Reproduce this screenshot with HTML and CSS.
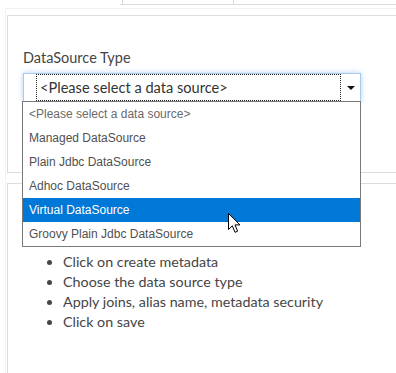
FILE: index.html
```html
<!DOCTYPE html>
<html lang="en">
<head>
    <meta charset="UTF-8">
    <meta name="viewport" content="width=device-width, initial-scale=1.0">
    <title>Create Metadata</title>
    <link rel="stylesheet" href="styles.css">
</head>
<body>
    <!-- Tab strip, scrolled mostly out of view -->
    <div class="tabs">
        <div class="tab"></div>
        <div class="tab tab-wide"></div>
    </div>

    <div class="page">
        <!-- Form card with the datasource select -->
        <div class="card card-form">
            <label class="field-label">DataSource Type</label>
            <div class="select">
                <div class="select-value">&lt;Please select a data source&gt;</div>
                <div class="select-arrow"></div>

                <!-- Open dropdown list -->
                <ul class="options">
                    <li class="option placeholder">&lt;Please select a data source&gt;</li>
                    <li class="option">Managed DataSource</li>
                    <li class="option">Plain Jdbc DataSource</li>
                    <li class="option">Adhoc DataSource</li>
                    <li class="option selected">Virtual DataSource</li>
                    <li class="option">Groovy Plain Jdbc DataSource</li>
                </ul>
                <!-- Mouse pointer over the hovered option -->
                <svg class="cursor" width="13" height="21" viewBox="0 0 13 21">
                    <path d="M0.5 0.5 L0.5 16.5 L4.3 12.8 L7 19.3 L9.6 18.2 L7 11.9 L12 11.9 Z" fill="#fff" stroke="#000" stroke-width="1" stroke-linejoin="round"/>
                </svg>
            </div>
        </div>

        <!-- Steps card -->
        <div class="card card-steps">
            <ul class="steps">
                <li>Click on create metadata</li>
                <li>Choose the data source type</li>
                <li>Apply joins, alias name, metadata security</li>
                <li>Click on save</li>
            </ul>
        </div>
    </div>
</body>
</html>
```

FILE: styles.css
```css
/* Page base */
body {
    margin: 0;
    width: 396px;
    height: 373px;
    overflow: hidden;
    background: #fff;
    font-family: 'Lato', 'Liberation Sans', sans-serif;
}

/* Tab strip at the very top */
.tabs {
    display: flex;
    height: 4px;
    margin-left: 120px;
    border-bottom: 1px solid #dadada;
}

.tab {
    width: 2px;
    border-right: 1px solid #dadada;
}

.tab-wide {
    width: 110px;
}

/* Outer page container */
.page {
    margin: 3px 0 0 5px;
    padding: 6px 0 0 1px;
    border-top: 1px solid #f1f1f1;
    border-left: 1px solid #f1f1f1;
}

/* Cards */
.card {
    box-sizing: border-box;
    border: 1px solid #dcdcdc;
    border-right: none;
    background: #fff;
}

.card-form {
    position: relative;
    z-index: 2;
    height: 158px;
    padding: 33px 0 0 15px;
}

.card-steps {
    height: 200px;
    margin-top: 10px;
    padding-top: 68px;
}

/* Field label */
.field-label {
    display: block;
    height: 18px;
    margin-bottom: 6px;
    font-size: 14.5px;
    line-height: 18px;
    color: #454545;
}

/* Focused select box */
.select {
    position: relative;
    display: flex;
    width: 324px;
    height: 27px;
    padding-left: 12px;
    border: 1px solid #a6cbee;
    box-shadow: 0 0 5px rgba(110, 170, 235, 0.55);
    background: #fff;
}

.select-value {
    flex: 1;
    padding-left: 3px;
    border: 1px dotted #222;
    font-size: 14.6px;
    line-height: 25px;
    color: #333;
}

.select-arrow {
    position: relative;
    width: 19px;
}

.select-arrow::after {
    content: "";
    position: absolute;
    left: 6px;
    top: 12px;
    border-left: 4px solid transparent;
    border-right: 4px solid transparent;
    border-top: 4px solid #111;
}

/* Dropdown option list */
.options {
    position: absolute;
    top: 27px;
    left: -2px;
    width: 337px;
    margin: 0;
    padding: 0;
    list-style: none;
    border: 1px solid #7a7a7a;
    background: #fff;
}

.option {
    height: 24px;
    padding-left: 6px;
    font-family: 'Liberation Sans', sans-serif;
    font-size: 12px;
    line-height: 24px;
    color: #505050;
}

.option.placeholder {
    color: #6a6a6a;
}

.option.selected {
    background: #0078d7;
    color: #fff;
}

.cursor {
    position: absolute;
    left: 204px;
    top: 139px;
}

/* Step bullets */
.steps {
    margin: 0;
    padding-left: 55px;
    font-size: 14.3px;
    line-height: 20px;
    color: #454545;
}
```
